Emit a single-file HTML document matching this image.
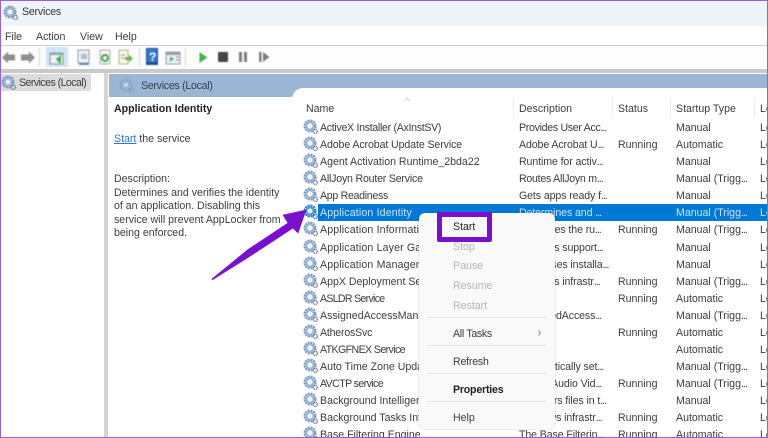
<!DOCTYPE html>
<html><head><meta charset="utf-8"><style>
html,body{margin:0;padding:0;background:#fff}
#p{position:relative;width:768px;height:438px;overflow:hidden;background:#fff;font:10.6px "Liberation Sans",sans-serif;color:#3c3c3c;filter:blur(.3px)}
#p div,#p span.a{position:absolute;white-space:nowrap}
.r{position:absolute;left:0;width:768px;height:17px;line-height:17px}
.r span{position:absolute;top:1px;white-space:nowrap}
.n{left:320px}.d{left:519px;letter-spacing:-.1px}.s{left:618px}.t{left:676px}.l{left:760px}
.r svg{position:absolute;left:303px;top:0}
i{font-style:normal;letter-spacing:-1px}
.m{left:453px;font-size:10.6px}
.g{color:#b4b4b4}
.sep{left:427px;width:120px;height:1px;background:#e6e6e6}
</style></head><body><div id="p">
<svg width="0" height="0" style="position:absolute"><defs>
<g id="gear"><circle cx="7" cy="7" r="5.1" fill="none" stroke="#7b9bc4" stroke-width="2.8" stroke-dasharray="2 .7"/><circle cx="7" cy="7" r="3.3" fill="none" stroke="#9db9d8" stroke-width="1.6"/><circle cx="7" cy="7" r="1.7" fill="#eef4fa"/><circle cx="12.300" cy="12.300" r="2.100" fill="none" stroke="#7f90a4" stroke-width="1.600" stroke-dasharray="1.200 .5"/></g>
<g id="gear2"><circle cx="7" cy="7" r="5.100" fill="none" stroke="#2f7cc8" stroke-width="2.800" stroke-dasharray="2 .7"/><circle cx="7" cy="7" r="3.300" fill="none" stroke="#4f97dc" stroke-width="1.600"/><circle cx="7" cy="7" r="1.700" fill="#e6f1fb"/><circle cx="12.300" cy="12.300" r="2.100" fill="none" stroke="#3f7fb8" stroke-width="1.600" stroke-dasharray="1.200 .5"/></g>
</defs></svg>
<div style="left:0;top:0;width:768px;height:26px;background:#eff4f9"></div>
<svg style="position:absolute;left:3px;top:5px" width="16" height="16"><use href="#gear"/></svg>
<div style="left:22px;top:6px;font-size:10.6px;letter-spacing:-.2px;line-height:13px;color:#333">Services</div>
<div style="left:5px;top:31px;line-height:13px;font-size:10.6px">File</div>
<div style="left:36px;top:31px;line-height:13px;font-size:10.6px">Action</div>
<div style="left:80px;top:31px;line-height:13px;font-size:10.6px">View</div>
<div style="left:115px;top:31px;line-height:13px;font-size:10.6px">Help</div>
<div style="left:0;top:45px;width:768px;height:1px;background:#d0d0d0"></div>
<div style="left:0;top:69px;width:768px;height:4px;background:#c9c9c9"></div>
<div style="left:0;top:46px;width:768px;height:23px;background:#fdfdfd"></div>
<svg style="position:absolute;left:0;top:46px;filter:blur(.4px)" width="290" height="23">
<path d="M2 11.500l6-6v3h7v6H8v3z" fill="#8f8f8f"/>
<path d="M35 11.500l-6-6v3h-8v6h8v3z" fill="#8f8f8f"/>
<rect x="39" y="2" width="1" height="19" fill="#d8d8d8"/>
<rect x="46" y="1" width="22" height="20" fill="#cfe5f8"/>
<rect x="50" y="7" width="13" height="11" fill="#eef1f4" stroke="#8c97a3"/><rect x="50" y="7" width="13" height="2" fill="#98a2ae"/><path d="M61 9v8h-2l-3-4z" fill="#3fb85c"/>
<rect x="78" y="4" width="11" height="13" fill="#eef0f3" stroke="#97a0aa"/><rect x="81" y="8" width="6" height="5" fill="#b5bfca"/><rect x="79" y="17" width="10" height="2" fill="#5a90c8"/>
<rect x="100" y="4" width="10" height="14" rx="1" fill="#f4f4f4" stroke="#b0b0b0"/><circle cx="105" cy="12" r="3" fill="none" stroke="#3fa64d" stroke-width="2"/>
<rect x="119" y="4" width="9" height="14" fill="#f8f4e4" stroke="#bdb59a"/><path d="M121 9h4M121 12h3" stroke="#999"/><path d="M125 11h4V8.500l4 4-4 4V14h-4z" fill="#63bb50"/>
<rect x="139" y="2" width="1" height="19" fill="#d8d8d8"/>
<rect x="146" y="2" width="12" height="17" fill="#1e4f9c"/><rect x="147" y="3" width="10" height="13" fill="#3479c9"/><text x="149" y="15" font-family="Liberation Sans" font-size="12" font-weight="bold" fill="#fff">?</text>
<rect x="166" y="6" width="14" height="12" fill="#e9edf1" stroke="#98a1ac"/><rect x="166" y="6" width="14" height="3" fill="#98a2ae"/><path d="M170 10.500v5l4-2.500z" fill="#3fb85c"/><path d="M176 11h3M176 14h3" stroke="#8a96a2"/>
<rect x="185" y="2" width="1" height="19" fill="#d8d8d8"/>
<path d="M200 7l6.500 4.500-6.500 4.500z" fill="#3cb54a" stroke="#3cb54a"/>
<rect x="218" y="6" width="10" height="10" rx="1" fill="#474747"/>
<rect x="239" y="6" width="3" height="10" fill="#7f7f7f"/><rect x="244" y="6" width="3" height="10" fill="#7f7f7f"/>
<rect x="259" y="6" width="2.500" height="10" fill="#7f7f7f"/><path d="M263 6l6.500 5-6.500 5z" fill="#7f7f7f"/>
</svg>
<div style="left:1px;top:74px;width:90px;height:17px;background:#dcdcdc"></div>
<svg style="position:absolute;left:1px;top:75px" width="16" height="16"><use href="#gear"/></svg>
<div style="left:19px;top:76px;line-height:14px;font-size:10.6px;letter-spacing:-.55px">Services (Local)</div>
<div style="left:104px;top:73px;width:4px;height:365px;background:#d4d4d4"></div>
<div style="left:109px;top:74px;width:659px;height:23px;background:#9bb6d4"></div>
<svg style="position:absolute;left:119px;top:78px" width="16" height="16"><use href="#gear" opacity=".6"/></svg>
<div style="left:141px;top:79px;line-height:14px;font-size:10.6px;letter-spacing:-.27px;color:#34404f">Services (Local)</div>
<svg style="position:absolute;left:288px;top:86px" width="480" height="14"><path d="M4 12C6 5 9 2 16 2H480V14H0z" fill="#fff"/></svg>
<div style="left:114px;top:102px;font-weight:bold;font-size:10.6px;line-height:14px;color:#222">Application Identity</div>
<div style="left:114px;top:132px;line-height:14px;font-size:10.6px"><span style="color:#2a7bd0;text-decoration:underline">Start</span> the service</div>
<div style="left:114px;top:173px;line-height:13.5px;font-size:10.6px">Description:<br>Determines and verifies the identity<br>of an application. Disabling this<br>service will prevent AppLocker from<br>being enforced.</div>
<div style="left:306px;top:102px;line-height:14px">Name</div>
<div style="left:519px;top:102px;line-height:14px">Description</div>
<div style="left:618px;top:102px;line-height:14px">Status</div>
<div style="left:676px;top:102px;line-height:14px">Startup Type</div>
<div style="left:760px;top:102px;line-height:14px">Lo</div>
<div style="left:513px;top:97px;width:1px;height:20px;background:#ececec"></div>
<div style="left:612px;top:97px;width:1px;height:20px;background:#ececec"></div>
<div style="left:670px;top:97px;width:1px;height:20px;background:#ececec"></div>
<div style="left:754px;top:97px;width:1px;height:20px;background:#ececec"></div>
<svg style="position:absolute;left:403px;top:97px" width="8" height="5"><path d="M1 4l3-3 3 3" fill="none" stroke="#d4d4d4"/></svg>
<div style="left:318px;top:204px;width:450px;height:17px;background:#0078d7"></div>

<div class="r" style="top:119px"><svg width="16" height="16"><use href="#gear"/></svg><span class="n" style="letter-spacing:-.3px">ActiveX Installer (AxInstSV)</span><span class="d" style="letter-spacing:-.3px">Provides User Acc<i>...</i></span><span class="t">Manual</span><span class="l">Lo</span></div>
<div class="r" style="top:136px"><svg width="16" height="16"><use href="#gear"/></svg><span class="n" style="letter-spacing:-.1px">Adobe Acrobat Update Service</span><span class="d">Adobe Acrobat U<i>...</i></span><span class="s">Running</span><span class="t">Automatic</span><span class="l">Lo</span></div>
<div class="r" style="top:153px"><svg width="16" height="16"><use href="#gear"/></svg><span class="n">Agent Activation Runtime_2bda22</span><span class="d">Runtime for activ<i>...</i></span><span class="t">Manual</span><span class="l">Lo</span></div>
<div class="r" style="top:170px"><svg width="16" height="16"><use href="#gear"/></svg><span class="n" style="letter-spacing:-.2px">AllJoyn Router Service</span><span class="d" style="letter-spacing:-.25px">Routes AllJoyn m<i>...</i></span><span class="t">Manual (Trigg<i>...</i></span><span class="l">Lo</span></div>
<div class="r" style="top:187px"><svg width="16" height="16"><use href="#gear"/></svg><span class="n" style="letter-spacing:-.3px">App Readiness</span><span class="d">Gets apps ready f<i>...</i></span><span class="t">Manual</span><span class="l">Lo</span></div>
<div class="r" style="top:204px;color:#cfe6fa"><svg width="16" height="16"><use href="#gear2"/></svg><span class="n" style="letter-spacing:.15px">Application Identity</span><span class="d">Determines and <i>...</i></span><span class="t">Manual (Trigg<i>...</i></span><span class="l">Lo</span></div>
<div class="r" style="top:221px"><svg width="16" height="16"><use href="#gear"/></svg><span class="n" style="letter-spacing:.15px">Application Information</span><span class="d">Facilitates the ru<i>...</i></span><span class="s">Running</span><span class="t">Manual (Trigg<i>...</i></span><span class="l">Lo</span></div>
<div class="r" style="top:239px"><svg width="16" height="16"><use href="#gear"/></svg><span class="n" style="letter-spacing:.15px">Application Layer Gateway Service</span><span class="d">Provides support<i>...</i></span><span class="t">Manual</span><span class="l">Lo</span></div>
<div class="r" style="top:256px"><svg width="16" height="16"><use href="#gear"/></svg><span class="n" style="letter-spacing:.15px">Application Management</span><span class="d">Processes installa<i>...</i></span><span class="t">Manual</span><span class="l">Lo</span></div>
<div class="r" style="top:273px"><svg width="16" height="16"><use href="#gear"/></svg><span class="n">AppX Deployment Service</span><span class="d">Provides infrastr<i>...</i></span><span class="s">Running</span><span class="t">Manual (Trigg<i>...</i></span><span class="l">Lo</span></div>
<div class="r" style="top:290px"><svg width="16" height="16"><use href="#gear"/></svg><span class="n" style="letter-spacing:-.7px">ASLDR Service</span><span class="s">Running</span><span class="t">Automatic</span><span class="l">Lo</span></div>
<div class="r" style="top:307px"><svg width="16" height="16"><use href="#gear"/></svg><span class="n">AssignedAccessManager</span><span class="d">AssignedAccess<i>...</i></span><span class="t">Manual (Trigg<i>...</i></span><span class="l">Lo</span></div>
<div class="r" style="top:324px"><svg width="16" height="16"><use href="#gear"/></svg><span class="n" style="letter-spacing:-.2px">AtherosSvc</span><span class="s">Running</span><span class="t">Automatic</span><span class="l">Lo</span></div>
<div class="r" style="top:341px"><svg width="16" height="16"><use href="#gear"/></svg><span class="n" style="letter-spacing:-.6px">ATKGFNEX Service</span><span class="t">Automatic</span><span class="l">Lo</span></div>
<div class="r" style="top:358px"><svg width="16" height="16"><use href="#gear"/></svg><span class="n">Auto Time Zone Updater</span><span class="d">Automatically set<i>...</i></span><span class="t">Manual (Trigg<i>...</i></span><span class="l">Lo</span></div>
<div class="r" style="top:375px"><svg width="16" height="16"><use href="#gear"/></svg><span class="n" style="letter-spacing:-.6px">AVCTP service</span><span class="d">This is Audio Vid<i>...</i></span><span class="s">Running</span><span class="t">Manual (Trigg<i>...</i></span><span class="l">Lo</span></div>
<div class="r" style="top:392px"><svg width="16" height="16"><use href="#gear"/></svg><span class="n">Background Intelligent</span><span class="d">Transfers files in t<i>...</i></span><span class="t">Manual</span><span class="l">Lo</span></div>
<div class="r" style="top:409px"><svg width="16" height="16"><use href="#gear"/></svg><span class="n">Background Tasks Infrastructure</span><span class="d">Windows infrastr<i>...</i></span><span class="s">Running</span><span class="t">Automatic</span><span class="l">Lo</span></div>
<div class="r" style="top:426px"><svg width="16" height="16"><use href="#gear"/></svg><span class="n">Base Filtering Engine</span><span class="d">The Base Filterin<i>...</i></span><span class="s">Running</span><span class="t">Automatic</span><span class="l">Lo</span></div>

<div style="left:419px;top:213px;width:136px;height:216px;background:#f9f9f9;border-radius:6px;box-shadow:0 0 2px rgba(0,0,0,.2)"></div>
<div class="m" style="top:220px;line-height:14px;color:#222">Start</div>
<div class="m g" style="top:240px;line-height:14px">Stop</div>
<div class="m g" style="top:259px;line-height:14px">Pause</div>
<div class="m g" style="top:279px;line-height:14px">Resume</div>
<div class="m g" style="top:299px;line-height:14px">Restart</div>
<div class="sep" style="top:317px"></div>
<div class="m" style="top:327px;line-height:14px;letter-spacing:-.3px">All Tasks</div>
<svg style="position:absolute;left:537px;top:330px" width="5" height="6"><path d="M1.500 .5l2 2.500-2 2.500" fill="none" stroke="#888"/></svg>
<div class="sep" style="top:345px"></div>
<div class="m" style="top:355px;line-height:14px;letter-spacing:-.2px">Refresh</div>
<div class="sep" style="top:373px"></div>
<div class="m" style="top:383px;line-height:14px;font-weight:bold;color:#222;letter-spacing:-.2px">Properties</div>
<div class="sep" style="top:401px"></div>
<div class="m" style="top:411px;line-height:14px">Help</div>
<div style="left:437px;top:212px;width:45px;height:20px;border:5px solid #7a0fcf;border-radius:2px"></div>
<svg style="position:absolute;left:205px;top:205px" width="110" height="80"><path d="M101 5L78 10l5 8L43 44.500 7 74l.5 .7L43 52.500 88 23l5 5z" fill="#7a0fcf" stroke="#7a0fcf" stroke-width=".6" stroke-linejoin="round"/></svg>
<div style="left:0;top:0;width:766px;height:436px;border:1px solid #9a5fd6"></div>
</div></body></html>
